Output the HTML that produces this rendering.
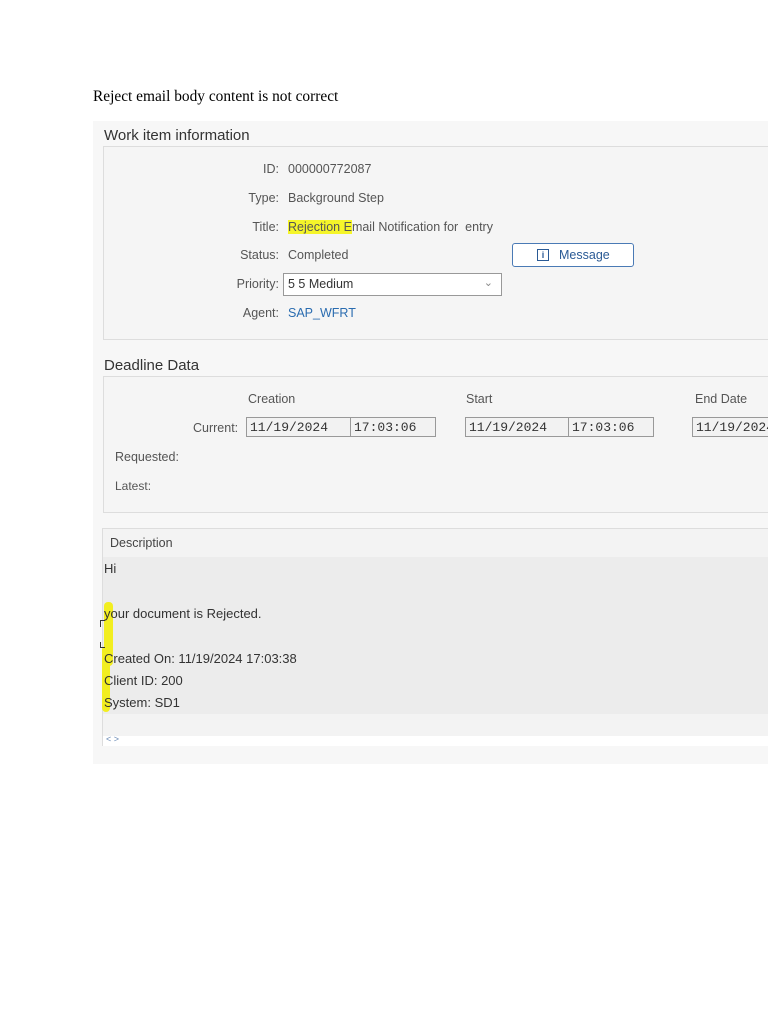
<!DOCTYPE html>
<html><head><meta charset="utf-8"><style>
body{margin:0;width:768px;height:1024px;background:#fff;position:relative;overflow:hidden;font-family:"Liberation Sans",sans-serif;}
.a{position:absolute;white-space:nowrap;}
.s{font-size:12.5px;color:#555;}
.in{position:absolute;border:1px solid #999;background:#f2f2f2;font-family:"Liberation Mono",monospace;font-size:13px;color:#333;height:20px;line-height:20px;padding-left:3px;box-sizing:border-box;}
.hl{background:#f5f52a;}
</style></head><body>
<div class="a" style="left:93px;top:88px;font-family:'Liberation Serif',serif;font-size:15.4px;color:#000">Reject email body content is not correct</div>
<div class="a" style="left:93px;top:121px;width:675px;height:643px;background:#f7f7f7"></div>
<div class="a" style="left:104px;top:127px;font-size:15px;color:#333">Work item information</div>
<div class="a" style="left:103px;top:146px;width:670px;height:194px;border:1px solid #ddd;background:#f5f5f5;box-sizing:border-box"></div>
<div class="a s" style="right:489px;top:162px">ID:</div><div class="a s" style="left:288px;top:162px">000000772087</div>
<div class="a s" style="right:489px;top:191px">Type:</div><div class="a s" style="left:288px;top:191px">Background Step</div>
<div class="a s" style="right:489px;top:220px">Title:</div><div class="a s" style="left:288px;top:220px"><span class="hl">Rejection E</span>mail Notification for&nbsp; entry</div>
<div class="a s" style="right:489px;top:248px">Status:</div><div class="a s" style="left:288px;top:248px">Completed</div>
<div class="a" style="left:512px;top:243px;width:122px;height:24px;border:1px solid #4a7ab5;border-radius:3px;background:#fff;box-sizing:border-box;font-size:12.5px;color:#2a5a95;line-height:22px"><span style="position:absolute;left:24px;top:5px;width:10px;height:10px;border:1px solid #2a5a95;font-size:9px;line-height:10px;text-align:center;font-weight:bold">i</span><span style="position:absolute;left:46px">Message</span></div>
<div class="a s" style="right:489px;top:277px">Priority:</div>
<div class="a" style="left:283px;top:273px;width:219px;height:23px;border:1px solid #999;background:#fff;box-sizing:border-box;font-size:12.5px;color:#333;line-height:21px;padding-left:4px">5 5 Medium<span style="position:absolute;right:8px;top:-1px;color:#888;font-size:11px">&#8964;</span></div>
<div class="a s" style="right:489px;top:306px">Agent:</div><div class="a s" style="left:288px;top:306px;color:#2a6cb0">SAP_WFRT</div>
<div class="a" style="left:104px;top:357px;font-size:15px;color:#333">Deadline Data</div>
<div class="a" style="left:103px;top:376px;width:670px;height:137px;border:1px solid #ddd;background:#f5f5f5;box-sizing:border-box"></div>
<div class="a s" style="left:248px;top:392px">Creation</div>
<div class="a s" style="left:466px;top:392px">Start</div>
<div class="a s" style="left:695px;top:392px">End Date</div>
<div class="a s" style="left:193px;top:421px">Current:</div>
<div class="in" style="left:246px;top:417px;width:105px">11/19/2024</div>
<div class="in" style="left:350px;top:417px;width:86px">17:03:06</div>
<div class="in" style="left:465px;top:417px;width:104px">11/19/2024</div>
<div class="in" style="left:568px;top:417px;width:86px">17:03:06</div>
<div class="in" style="left:692px;top:417px;width:90px">11/19/2024</div>
<div class="a s" style="left:115px;top:450px">Requested:</div>
<div class="a s" style="left:115px;top:479px;font-size:12px">Latest:</div>
<div class="a" style="left:102px;top:528px;width:670px;height:218px;border:1px solid #ddd;background:#f3f3f3;box-sizing:border-box"></div>
<div class="a s" style="left:110px;top:536px;color:#444">Description</div>
<div class="a" style="left:103px;top:557px;width:665px;height:157px;background:#ececec"></div>
<div class="a" style="left:103px;top:736px;width:665px;height:10px;background:#fff"></div>
<div class="a" style="left:106px;top:734px;font-size:9px;color:#6a8ab5">&lt; &gt;</div>
<div class="a" style="left:104px;top:602px;width:9px;height:64px;background:#f2ee20;border-radius:4px"></div>
<div class="a" style="left:102px;top:646px;width:8px;height:66px;background:#f2ee20;border-radius:4px"></div>
<div class="a" style="left:100px;top:620px;width:4px;height:6px;border-left:1px solid #333;border-top:1px solid #333"></div>
<div class="a" style="left:100px;top:642px;width:4px;height:5px;border-left:1px solid #333;border-bottom:1px solid #333"></div>
<div class="a" style="left:104px;top:561px;font-size:13px;color:#333">Hi</div>
<div class="a" style="left:104px;top:606px;font-size:13px;color:#333">your document is Rejected.</div>
<div class="a" style="left:104px;top:651px;font-size:13px;color:#333">Created On: 11/19/2024 17:03:38</div>
<div class="a" style="left:104px;top:673px;font-size:13px;color:#333">Client ID: 200</div>
<div class="a" style="left:104px;top:695px;font-size:13px;color:#333">System: SD1</div>
</body></html>
